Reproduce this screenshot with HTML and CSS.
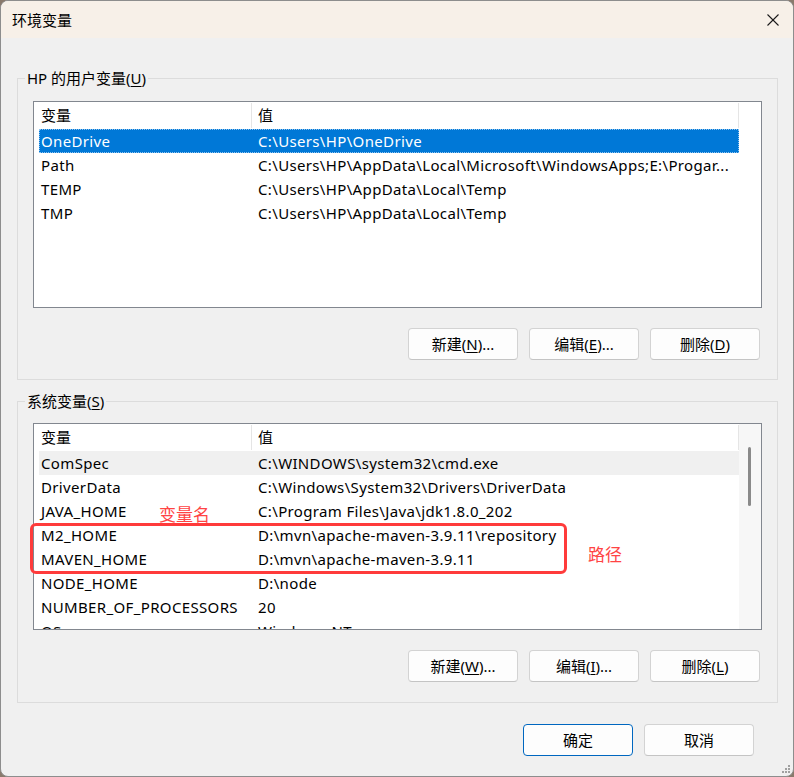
FILE: index.html
```html
<!DOCTYPE html>
<html lang="zh-CN">
<head>
    <meta charset="UTF-8">
    <meta name="viewport" content="width=device-width, initial-scale=1.0">
    <title>环境变量</title>
    <link rel="stylesheet" href="styles.css">
</head>
<body>
    <div class="window">
        <div class="titlebar">
            <span class="title">环境变量</span>
            <span class="close">
                <svg width="12" height="12" viewBox="0 0 12 12" fill="none" stroke="#1a1a1a" stroke-width="1.1">
                    <line x1="0.5" y1="0.5" x2="11.5" y2="11.5"></line>
                    <line x1="11.5" y1="0.5" x2="0.5" y2="11.5"></line>
                </svg>
            </span>
        </div>

        <div class="content">
            <fieldset class="group group-user">
                <legend>HP 的用户变量(<u>U</u>)</legend>
                <div class="list">
                    <div class="list-main">
                        <div class="list-head">
                            <div class="col-name">变量</div>
                            <div class="col-value">值</div>
                        </div>
                        <div class="row selected"><div class="col-name">OneDrive</div><div class="col-value">C:\Users\HP\OneDrive</div></div>
                        <div class="row"><div class="col-name">Path</div><div class="col-value">C:\Users\HP\AppData\Local\Microsoft\WindowsApps;E:\Progar...</div></div>
                        <div class="row"><div class="col-name">TEMP</div><div class="col-value">C:\Users\HP\AppData\Local\Temp</div></div>
                        <div class="row"><div class="col-name">TMP</div><div class="col-value">C:\Users\HP\AppData\Local\Temp</div></div>
                    </div>
                    <div class="list-side"></div>
                </div>
                <div class="actions">
                    <button class="btn">新建(<u>N</u>)...</button>
                    <button class="btn">编辑(<u>E</u>)...</button>
                    <button class="btn">删除(<u>D</u>)</button>
                </div>
            </fieldset>

            <fieldset class="group group-system">
                <legend>系统变量(<u>S</u>)</legend>
                <div class="list-wrap">
                    <div class="list">
                        <div class="list-main">
                            <div class="list-head">
                                <div class="col-name">变量</div>
                                <div class="col-value">值</div>
                            </div>
                            <div class="row hover"><div class="col-name">ComSpec</div><div class="col-value">C:\WINDOWS\system32\cmd.exe</div></div>
                            <div class="row"><div class="col-name">DriverData</div><div class="col-value">C:\Windows\System32\Drivers\DriverData</div></div>
                            <div class="row"><div class="col-name">JAVA_HOME</div><div class="col-value">C:\Program Files\Java\jdk1.8.0_202</div></div>
                            <div class="row"><div class="col-name">M2_HOME</div><div class="col-value">D:\mvn\apache-maven-3.9.11\repository</div></div>
                            <div class="row"><div class="col-name">MAVEN_HOME</div><div class="col-value">D:\mvn\apache-maven-3.9.11</div></div>
                            <div class="row"><div class="col-name">NODE_HOME</div><div class="col-value">D:\node</div></div>
                            <div class="row"><div class="col-name">NUMBER_OF_PROCESSORS</div><div class="col-value">20</div></div>
                            <div class="row"><div class="col-name">OS</div><div class="col-value">Windows_NT</div></div>
                        </div>
                        <div class="list-side scrollbar">
                            <div class="thumb"></div>
                        </div>
                    </div>
                    <!-- red annotations drawn over the screenshot -->
                    <div class="mark-box"></div>
                    <span class="mark-label mark-name">变量名</span>
                    <span class="mark-label mark-path">路径</span>
                </div>
                <div class="actions">
                    <button class="btn">新建(<u>W</u>)...</button>
                    <button class="btn">编辑(<u>I</u>)...</button>
                    <button class="btn">删除(<u>L</u>)</button>
                </div>
            </fieldset>

            <div class="dialog-actions">
                <button class="btn btn-default">确定</button>
                <button class="btn">取消</button>
            </div>
        </div>

        <svg class="grip" width="9" height="9" viewBox="0 0 9 9" fill="#a0a0a0">
            <rect x="7" y="1" width="2" height="2"></rect>
            <rect x="4" y="4" width="2" height="2"></rect>
            <rect x="7" y="4" width="2" height="2"></rect>
            <rect x="1" y="7" width="2" height="2"></rect>
            <rect x="4" y="7" width="2" height="2"></rect>
            <rect x="7" y="7" width="2" height="2"></rect>
        </svg>
    </div>
</body>
</html>
```

FILE: styles.css
```css
* {
    box-sizing: border-box;
}

body {
    margin: 0;
    padding: 0;
    background-color: #8a7a6c;
    font-family: "Noto Sans", "Noto Sans CJK SC", sans-serif;
    font-size: 15px;
    color: #000;
}

.window {
    position: relative;
    width: 794px;
    height: 777px;
    background-color: #f0f0f0;
    border: 1px solid #8d8d8d;
    border-radius: 8px;
    overflow: hidden;
}

.titlebar {
    display: flex;
    align-items: center;
    justify-content: space-between;
    height: 37px;
    padding: 0 14px 0 11px;
    background-color: #f7f0e8;
}

.title {
    font-size: 15px;
    line-height: 20px;
}

.close {
    display: flex;
    margin-top: 1px;
}

.content {
    padding: 0 15px 0 16px;
}

.group {
    margin: 0;
    padding: 13px 15px 19px 15px;
    border: 1px solid #dcdcdc;
    min-width: 0;
}

.group-user {
    margin-top: 30px;
}

.group-system {
    margin-top: 11px;
    padding-top: 12px;
    padding-bottom: 20px;
}

.group legend {
    margin-left: -8px;
    padding: 0 2px;
    line-height: 20px;
}

u {
    text-underline-offset: 2px;
}

.list-wrap {
    position: relative;
}

.list {
    display: flex;
    height: 207px;
    border: 1px solid #82878f;
    background-color: #fff;
    overflow: hidden;
}

.list-main {
    width: 705px;
    padding-left: 5px;
}

.list-side {
    flex: 1;
}

.list-head {
    display: flex;
    height: 27px;
    align-items: center;
}

.list-head .col-name {
    border-right: 1px solid #e5e5e5;
    height: 25px;
    line-height: 25px;
}

.list-head .col-value {
    border-right: 1px solid #e5e5e5;
    height: 25px;
    line-height: 25px;
}

.col-name {
    width: 213px;
    padding-left: 2px;
    white-space: nowrap;
}

.col-value {
    flex: 1;
    padding-left: 6px;
    white-space: nowrap;
}

.row {
    display: flex;
    height: 24px;
    line-height: 24px;
    letter-spacing: 0.35px;
}

.row.selected {
    background-color: #0078d7;
    color: #fff;
    outline: 1px dotted #8fc3ee;
    outline-offset: -1px;
}

.row.hover {
    background-color: #f0f0f0;
}

.scrollbar {
    position: relative;
    background-color: #f7f7f7;
}

.thumb {
    position: absolute;
    left: 9px;
    top: 23px;
    width: 3px;
    height: 59px;
    border-radius: 2px;
    background-color: #8a8a8a;
}

.mark-box {
    position: absolute;
    left: -3px;
    top: 100px;
    width: 537px;
    height: 51px;
    border: 3px solid #ff3b3b;
    border-radius: 6px;
}

.mark-label {
    position: absolute;
    color: #ff4444;
    font-size: 17px;
    line-height: 20px;
}

.mark-name {
    left: 126px;
    top: 82px;
}

.mark-path {
    left: 555px;
    top: 122px;
}

.actions {
    display: flex;
    justify-content: flex-end;
    gap: 11px;
    margin-top: 20px;
    padding-right: 2px;
}

.btn {
    width: 110px;
    height: 32px;
    padding: 0 0 1px;
    background-color: #fdfdfd;
    border: 1px solid #d3d3d3;
    border-bottom-color: #c4c4c4;
    border-radius: 4px;
    font-family: inherit;
    font-size: 15px;
    color: #000;
}

.dialog-actions {
    display: flex;
    justify-content: flex-end;
    gap: 11px;
    margin-top: 21px;
    padding-right: 24px;
}

.btn-default {
    border: 1px solid #0067c0;
}

.grip {
    position: absolute;
    right: 3px;
    bottom: 3px;
}
```
